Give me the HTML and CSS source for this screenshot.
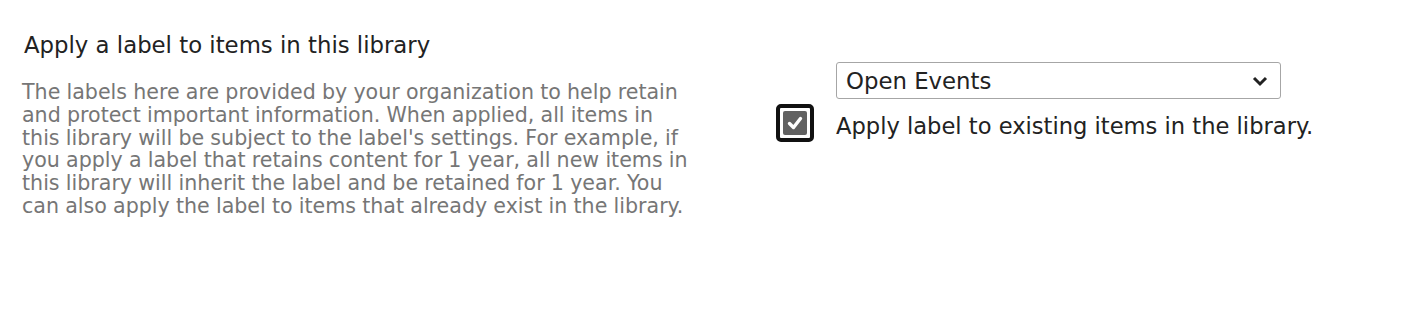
FILE: index.html
```html
<!DOCTYPE html>
<html>
<head>
<meta charset="utf-8">
<link rel="stylesheet" href="styles.css">
</head>
<body>
<div class="section">
  <div class="info">
    <h2 class="title">Apply a label to items in this library</h2>
    <p class="desc">The labels here are provided by your organization to help retain and protect important information. When applied, all items in this library will be subject to the label's settings. For example, if you apply a label that retains content for 1 year, all new items in this library will inherit the label and be retained for 1 year. You can also apply the label to items that already exist in the library.</p>
  </div>
  <div class="controls">
    <div class="select">
      <span class="select-value">Open Events</span>
      <svg class="chev" width="16" height="12" viewBox="0 0 16 12"><path d="M2 3 L8 9 L14 3" fill="none" stroke="#222" stroke-width="3"/></svg>
    </div>
    <label class="check-row">
      <span class="check-focus">
        <span class="check-box">
          <svg width="20" height="20" viewBox="0 0 20 20"><path d="M4.5 10.5 L8.5 14.5 L15.5 5.5" fill="none" stroke="#fff" stroke-width="3.4" stroke-linecap="round" stroke-linejoin="round"/></svg>
        </span>
      </span>
      <span class="check-label">Apply label to existing items in the library.</span>
    </label>
  </div>
</div>
</body>
</html>
```
FILE: styles.css
```css
html, body {
  margin: 0;
  padding: 0;
  background: #fff;
}
body {
  font-family: "DejaVu Sans", "Liberation Sans", sans-serif;
}
.section {
  display: flex;
  padding: 30px 0 0 24px;
}
.info {
  width: 680px;
}
.title {
  margin: 0;
  font-size: 22.8px;
  font-weight: normal;
  color: #222;
  line-height: 30px;
}
.desc {
  margin: 21px 0 0 -2px;
  font-size: 20.6px;
  line-height: 22.8px;
  color: #767676;
  width: 668px;
  word-spacing: -0.35px;
}
.controls {
  margin-left: 72px;
  padding-top: 32px;
  display: flex;
  flex-direction: column;
}
.select {
  margin-left: 60px;
  display: flex;
  align-items: center;
  justify-content: space-between;
  padding: 0 12px 0 9px;
  box-sizing: border-box;
  width: 445px;
  height: 37px;
  border: 1px solid #a6a6a6;
  border-radius: 3px;
}
.select-value {
  font-size: 22.8px;
  color: #222;
}
.check-row {
  display: flex;
  align-items: center;
  margin-top: 5px;
}
.check-focus {
  width: 38px;
  height: 38px;
  box-sizing: border-box;
  border: 4px solid #111;
  border-radius: 5px;
  display: flex;
  align-items: center;
  justify-content: center;
}
.check-box {
  width: 24px;
  height: 24px;
  background: #616161;
  border-radius: 2px;
  display: flex;
  align-items: center;
  justify-content: center;
}
.check-label {
  margin-left: 22px;
  font-size: 22.6px;
  color: #222;
  position: relative;
  top: 3px;
}
```
